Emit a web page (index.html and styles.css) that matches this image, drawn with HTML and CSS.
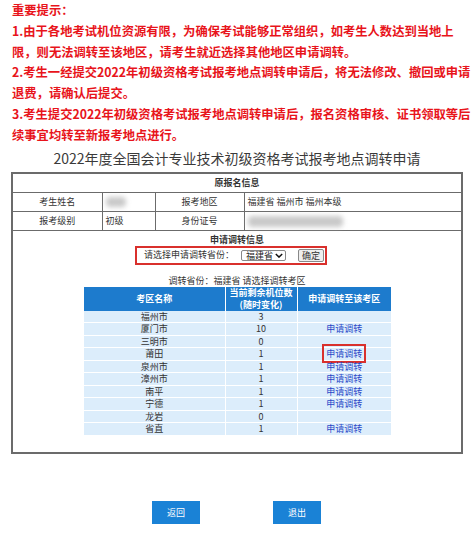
FILE: index.html
```html
<!DOCTYPE html>
<html lang="zh-CN">
<head>
<meta charset="utf-8">
<title>2022年度全国会计专业技术初级资格考试报考地点调转申请</title>
<link rel="stylesheet" href="styles.css">
</head>
<body>
<div class="notice">
  <p>重要提示：</p>
  <p>1.由于各地考试机位资源有限，为确保考试能够正常组织，如考生人数达到当地上<br>限，则无法调转至该地区，请考生就近选择其他地区申请调转。</p>
  <p>2.考生一经提交2022年初级资格考试报考地点调转申请后，将无法修改、撤回或申请<br>退费，请确认后提交。</p>
  <p>3.考生提交2022年初级资格考试报考地点调转申请后，报名资格审核、证书领取等后<br>续事宜均转至新报考地点进行。</p>
</div>
<h1 class="title">2022年度全国会计专业技术初级资格考试报考地点调转申请</h1>
<table class="outer">
  <colgroup><col class="c1"><col class="c2"><col class="c3"><col class="c4"></colgroup>
  <tr><td colspan="4" class="sect">原报名信息</td></tr>
  <tr>
    <td class="ctr">考生姓名</td>
    <td><span class="blur blur-name"></span></td>
    <td class="ctr">报考地区</td>
    <td>福建省 福州市 福州本级</td>
  </tr>
  <tr>
    <td class="ctr">报考级别</td>
    <td>初级</td>
    <td class="ctr">身份证号</td>
    <td><span class="blur blur-id"></span></td>
  </tr>
  <tr>
    <td colspan="4" class="apply">
      <div class="sect-title">申请调转信息</div>
      <div class="pick">
        <span class="pick-label">请选择申请调转省份：</span>
        <span class="select">福建省<svg class="chev" viewBox="0 0 10 6" width="8" height="5"><path d="M1 1 L5 5 L9 1" fill="none" stroke="#111" stroke-width="1.8"/></svg></span>
        <span class="btn-ok">确定</span>
      </div>
      <div class="chosen">调转省份：福建省 请选择调转考区</div>
      <table class="areas">
        <colgroup><col class="a1"><col class="a2"><col class="a3"></colgroup>
        <tr class="head"><th>考区名称</th><th><span class="hl">当前剩余机位数</span><span class="hl">(随时变化)</span></th><th>申请调转至该考区</th></tr>
        <tr><td>福州市</td><td>3</td><td></td></tr>
        <tr><td>厦门市</td><td>10</td><td><a href="#">申请调转</a></td></tr>
        <tr><td>三明市</td><td>0</td><td></td></tr>
        <tr><td>莆田</td><td>1</td><td><a href="#" class="marked">申请调转</a></td></tr>
        <tr><td>泉州市</td><td>1</td><td><a href="#">申请调转</a></td></tr>
        <tr><td>漳州市</td><td>1</td><td><a href="#">申请调转</a></td></tr>
        <tr><td>南平</td><td>1</td><td><a href="#">申请调转</a></td></tr>
        <tr><td>宁德</td><td>1</td><td><a href="#">申请调转</a></td></tr>
        <tr><td>龙岩</td><td>0</td><td></td></tr>
        <tr><td>省直</td><td>1</td><td><a href="#">申请调转</a></td></tr>
      </table>
    </td>
  </tr>
</table>
<div class="actions">
  <span class="btn">返回</span>
  <span class="btn">退出</span>
</div>
</body>
</html>
```
FILE: styles.css
```css
html, body {
  margin: 0;
  padding: 0;
  background: #fff;
}
body {
  width: 474px;
  font-family: "Noto Sans CJK SC", "Noto Sans", sans-serif;
  color: #333;
}
.notice {
  padding: 0 0 0 12px;
  color: #e8141b;
  font-weight: bold;
  font-size: 12.3px;
  line-height: 20.8px;
  white-space: nowrap;
}
.notice p {
  margin: 0;
}
.title {
  margin: 2px 0 4px;
  font-size: 14px;
  font-weight: normal;
  line-height: 20px;
  text-align: center;
  color: #3a3a3a;
}
.outer {
  margin: 0 0 0 11px;
  width: 452px;
  border-collapse: collapse;
  border: 2px solid #6b6b6b;
  font-size: 9px;
  table-layout: fixed;
}
.outer .c1 { width: 90px; }
.outer .c2 { width: 53px; }
.outer .c3 { width: 89px; }
.outer > tbody > tr > td {
  border: 1px solid #6b6b6b;
  height: 18px;
  padding: 0 3px;
  line-height: 12px;
}
.outer .ctr { text-align: center; }
.outer .sect {
  text-align: center;
  font-weight: bold;
}
.blur {
  display: inline-block;
  vertical-align: middle;
  background: #c9c9c9;
  filter: blur(2.5px);
  border-radius: 4px;
}
.blur-name { width: 20px; height: 10px; }
.blur-id { width: 95px; height: 11px; }
.outer .apply {
  text-align: center;
  padding: 2px 0 16px;
  vertical-align: top;
}
.sect-title {
  font-weight: bold;
  line-height: 13px;
}
.pick {
  display: flex;
  align-items: center;
  width: 188px;
  height: 15px;
  margin: 0 auto 0 122px;
  border: 2px solid #d9302c;
  padding: 0;
}
.pick-label {
  margin-left: 7px;
  width: 97px;
  text-align: left;
}
.select {
  display: inline-flex;
  align-items: center;
  gap: 2px;
  height: 9px;
  padding: 0 2px 0 4px;
  border: 1px solid #888;
  border-radius: 2px;
  line-height: 9px;
  color: #222;
}
.btn-ok {
  margin-left: 12px;
  height: 11px;
  padding: 0 3px;
  border: 1px solid #888;
  background: #eee;
  border-radius: 2px;
  line-height: 11px;
}
.chosen {
  margin-top: 9px;
  line-height: 13px;
}
.areas {
  margin: 0 auto 0 71px;
  width: 307px;
  border-collapse: collapse;
  table-layout: fixed;
  font-size: 9px;
}
.areas .a1 { width: 141px; }
.areas .a2 { width: 72px; }
.areas th {
  background: #1d7bcd;
  color: #fff;
  font-weight: bold;
  height: 24px;
  padding: 0;
  line-height: 11px;
  border-right: 1px solid #fff;
}
.areas th .hl {
  display: block;
  line-height: 11.5px;
}
.areas th:last-child { border-right: 0; }
.areas td {
  background: #dcedfb;
  height: 11.5px;
  padding: 0;
  line-height: 11px;
  text-align: center;
  border-bottom: 1px solid #fff;
  border-right: 1px solid #fff;
}
.areas td:last-child { border-right: 0; }
.areas a {
  color: #2a48c8;
  text-decoration: none;
}
.areas a.marked {
  display: inline-block;
  outline: 2px solid #d9302c;
  outline-offset: 2px;
}
.actions {
  display: flex;
  justify-content: center;
  gap: 73px;
  margin-top: 47px;
  padding-right: 1px;
}
.btn {
  width: 48px;
  height: 23px;
  background: #1a82d6;
  color: #fff;
  font-size: 9px;
  line-height: 23px;
  text-align: center;
}
```
